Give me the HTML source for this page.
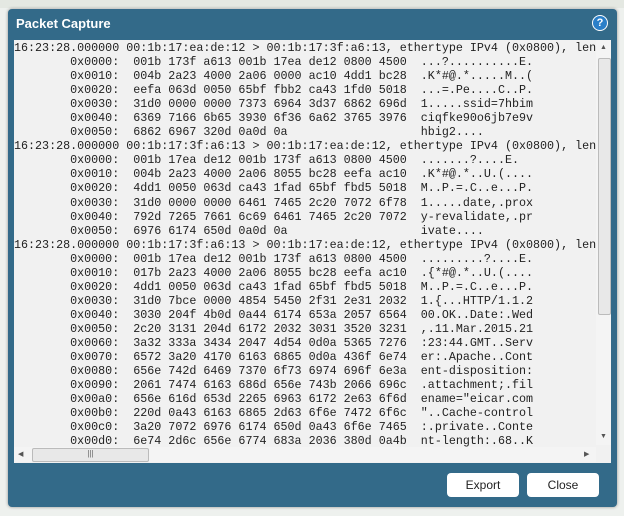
<!DOCTYPE html>
<html><head><style>
body{margin:0;width:624px;height:516px;background:#eef1ee;position:relative;overflow:hidden;font-family:"Liberation Sans",sans-serif}
.hdr{position:absolute;top:0;left:0;width:624px;height:8px;background:#e4e8e2;font-size:11px;color:#888}
.dlg{position:absolute;left:8px;top:9px;width:609px;height:498px;background:#336a89;border-radius:4px;box-shadow:0 0 3px rgba(0,0,0,.4)}
.title{position:absolute;left:8px;top:7px;color:#fff;font-weight:bold;font-size:13px}
.help{position:absolute;left:584px;top:6px;width:14px;height:14px;border-radius:50%;background:#2a7fc8;border:1.5px solid #fff;color:#fff;font-size:11px;font-weight:bold;text-align:center;line-height:14px}
.box{position:absolute;left:6px;top:31px;width:597px;height:423px;background:#f1f1f1;overflow:hidden}
pre{margin:0;position:absolute;left:0;top:1px;font-family:"Liberation Mono",monospace;font-size:11.7px;line-height:14.04px;color:#222;white-space:pre}
.vs{position:absolute;left:582px;top:0;width:15px;height:405px;background:#f4f4f4}
.vt{position:absolute;left:2px;top:18px;width:11px;height:255px;background:#e8e8e8;border:1px solid #bbb;border-radius:2px}
.hs{position:absolute;left:0;top:407px;width:582px;height:15px;background:#f4f4f4}
.ht{position:absolute;left:18px;top:1px;width:115px;height:12px;background:#e8e8e8;border:1px solid #bbb;border-radius:2px;font-size:8px;text-align:center;color:#666}
.btn{position:absolute;top:464px;width:72px;height:24px;background:#fff;border-radius:4px;font-size:12px;text-align:center;line-height:24px;color:#222}
.ar{position:absolute;font-size:7px;color:#555}
</style></head><body>
<div class="hdr"></div>
<div class="dlg">
<div class="title">Packet Capture</div>
<div class="help">?</div>
<div class="box">
<pre>16:23:28.000000 00:1b:17:ea:de:12 &gt; 00:1b:17:3f:a6:13, ethertype IPv4 (0x0800), len
        0x0000:  001b 173f a613 001b 17ea de12 0800 4500  ...?..........E.
        0x0010:  004b 2a23 4000 2a06 0000 ac10 4dd1 bc28  .K*#@.*.....M..(
        0x0020:  eefa 063d 0050 65bf fbb2 ca43 1fd0 5018  ...=.Pe....C..P.
        0x0030:  31d0 0000 0000 7373 6964 3d37 6862 696d  1.....ssid=7hbim
        0x0040:  6369 7166 6b65 3930 6f36 6a62 3765 3976  ciqfke90o6jb7e9v
        0x0050:  6862 6967 320d 0a0d 0a                   hbig2....
16:23:28.000000 00:1b:17:3f:a6:13 &gt; 00:1b:17:ea:de:12, ethertype IPv4 (0x0800), len
        0x0000:  001b 17ea de12 001b 173f a613 0800 4500  .......?....E.
        0x0010:  004b 2a23 4000 2a06 8055 bc28 eefa ac10  .K*#@.*..U.(....
        0x0020:  4dd1 0050 063d ca43 1fad 65bf fbd5 5018  M..P.=.C..e...P.
        0x0030:  31d0 0000 0000 6461 7465 2c20 7072 6f78  1.....date,.prox
        0x0040:  792d 7265 7661 6c69 6461 7465 2c20 7072  y-revalidate,.pr
        0x0050:  6976 6174 650d 0a0d 0a                   ivate....
16:23:28.000000 00:1b:17:3f:a6:13 &gt; 00:1b:17:ea:de:12, ethertype IPv4 (0x0800), len
        0x0000:  001b 17ea de12 001b 173f a613 0800 4500  .........?....E.
        0x0010:  017b 2a23 4000 2a06 8055 bc28 eefa ac10  .{*#@.*..U.(....
        0x0020:  4dd1 0050 063d ca43 1fad 65bf fbd5 5018  M..P.=.C..e...P.
        0x0030:  31d0 7bce 0000 4854 5450 2f31 2e31 2032  1.{...HTTP/1.1.2
        0x0040:  3030 204f 4b0d 0a44 6174 653a 2057 6564  00.OK..Date:.Wed
        0x0050:  2c20 3131 204d 6172 2032 3031 3520 3231  ,.11.Mar.2015.21
        0x0060:  3a32 333a 3434 2047 4d54 0d0a 5365 7276  :23:44.GMT..Serv
        0x0070:  6572 3a20 4170 6163 6865 0d0a 436f 6e74  er:.Apache..Cont
        0x0080:  656e 742d 6469 7370 6f73 6974 696f 6e3a  ent-disposition:
        0x0090:  2061 7474 6163 686d 656e 743b 2066 696c  .attachment;.fil
        0x00a0:  656e 616d 653d 2265 6963 6172 2e63 6f6d  ename="eicar.com
        0x00b0:  220d 0a43 6163 6865 2d63 6f6e 7472 6f6c  "..Cache-control
        0x00c0:  3a20 7072 6976 6174 650d 0a43 6f6e 7465  :.private..Conte
        0x00d0:  6e74 2d6c 656e 6774 683a 2036 380d 0a4b  nt-length:.68..K</pre>
<div class="vs"><div class="ar" style="left:4px;top:4px">▲</div><div class="vt"></div><div class="ar" style="left:4px;top:393px">▼</div></div>
<div class="hs"><div class="ar" style="left:4px;top:3px">◀</div><div class="ht">|||</div><div class="ar" style="left:570px;top:3px">▶</div></div>
</div>
<div class="btn" style="left:439px">Export</div>
<div class="btn" style="left:519px">Close</div>
</div>
</body></html>
